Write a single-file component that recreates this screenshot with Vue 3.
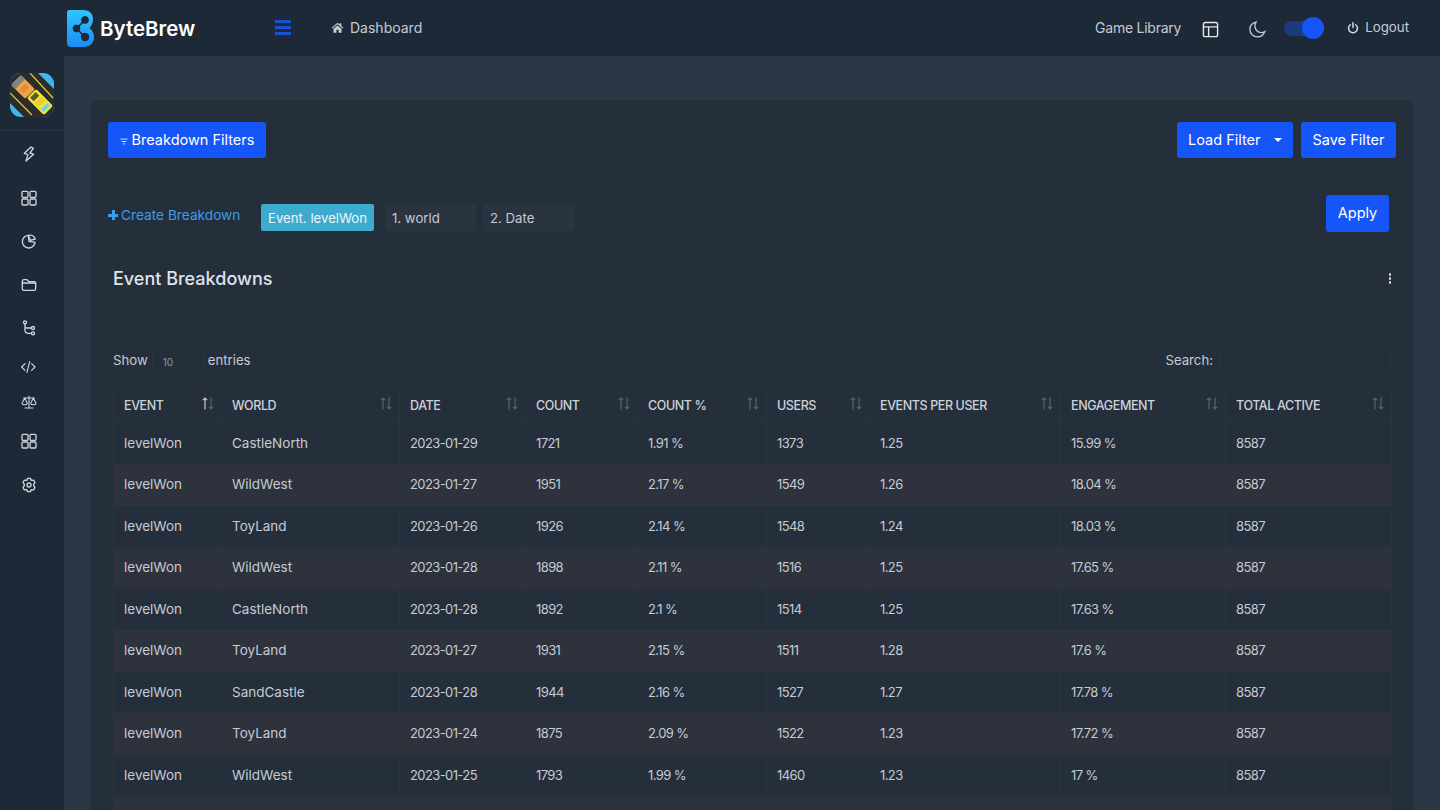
<script setup>
const navIcons = [
  { id: 'bolt', h: 44 }, { id: 'grid', h: 43.5 }, { id: 'pie', h: 43.5 }, { id: 'folder', h: 44.5 },
  { id: 'branch', h: 41.5 }, { id: 'code', h: 36 }, { id: 'scale', h: 34 }, { id: 'grid', h: 43 }, { id: 'gear', h: 46 }
]
const columns = [
  { name: 'EVENT', w: 108, active: true }, { name: 'WORLD', w: 178 }, { name: 'DATE', w: 126 },
  { name: 'COUNT', w: 112 }, { name: 'COUNT %', w: 129 }, { name: 'USERS', w: 103 },
  { name: 'EVENTS PER USER', w: 191 }, { name: 'ENGAGEMENT', w: 165 }, { name: 'TOTAL ACTIVE', w: 166 }
]
const rows = [
  ['levelWon', 'CastleNorth', '2023-01-29', '1721', '1.91 %', '1373', '1.25', '15.99 %', '8587'],
  ['levelWon', 'WildWest', '2023-01-27', '1951', '2.17 %', '1549', '1.26', '18.04 %', '8587'],
  ['levelWon', 'ToyLand', '2023-01-26', '1926', '2.14 %', '1548', '1.24', '18.03 %', '8587'],
  ['levelWon', 'WildWest', '2023-01-28', '1898', '2.11 %', '1516', '1.25', '17.65 %', '8587'],
  ['levelWon', 'CastleNorth', '2023-01-28', '1892', '2.1 %', '1514', '1.25', '17.63 %', '8587'],
  ['levelWon', 'ToyLand', '2023-01-27', '1931', '2.15 %', '1511', '1.28', '17.6 %', '8587'],
  ['levelWon', 'SandCastle', '2023-01-28', '1944', '2.16 %', '1527', '1.27', '17.78 %', '8587'],
  ['levelWon', 'ToyLand', '2023-01-24', '1875', '2.09 %', '1522', '1.23', '17.72 %', '8587'],
  ['levelWon', 'WildWest', '2023-01-25', '1793', '1.99 %', '1460', '1.23', '17 %', '8587'],
  ['', '', '', '', '', '', '', '', '']
]
</script>

<template>
  <div class="page">
    <header class="topbar">
      <div class="brand">
        <svg class="logo" viewBox="0 0 27 37">
          <defs>
            <linearGradient id="lg" x1="0" y1="0" x2="0" y2="1">
              <stop offset="0" stop-color="#2fc6ff" />
              <stop offset="1" stop-color="#1a8df6" />
            </linearGradient>
          </defs>
          <path fill="url(#lg)" d="M0 2C0 1 1 0 2 0H16C23 0 26 4 26 9C26 13 24.500 16 22.500 18C25 20 27 23 27 27C27 33 23 37 16 37H4C1.500 37 0 35.500 0 33Z" />
          <g fill="#1e2938" stroke="#1e2938">
            <circle cx="18" cy="10" r="3.400" />
            <circle cx="9.500" cy="18.500" r="3.400" />
            <circle cx="18" cy="27" r="3.800" />
            <path stroke-width="1.600" d="M18 10 9.500 18.500 18 27" fill="none" />
          </g>
        </svg>
        <span class="brand-name">ByteBrew</span>
      </div>
      <div class="burger"><i></i><i></i><i></i></div>
      <svg class="home" viewBox="0 0 24 20">
        <path fill="#c5cad3" d="M12 1 1 10.500 2.300 12 12 4 21.700 12 23 10.500 19 7V2H16V4.500ZM4.500 12.500V19.500H10V14H14V19.500H19.500V12.500L12 6.300Z" />
      </svg>
      <span class="crumb">Dashboard</span>
      <span class="spacer"></span>
      <span class="crumb library">Game Library</span>
      <svg class="layout-ico" viewBox="0 0 18 18" fill="none" stroke="#e4e7ec" stroke-width="1.500">
        <rect x="1.500" y="1.500" width="15" height="15" rx="2" />
        <path d="M1.500 6.200H16.500M7 6.200V16.500" />
      </svg>
      <svg class="moon" viewBox="0 0 18 18" fill="none" stroke="#c5cad3" stroke-width="1.400">
        <path d="M7.500 1.200C3.500 2 1 5.200 1 9C1 13.300 4.500 16.800 8.800 16.800C12.500 16.800 15.500 14.500 16.600 11.300C15.400 12 14.200 12.300 13 12.300C9.400 12.300 6.300 9.300 6.300 5.500C6.300 4 6.700 2.500 7.500 1.200Z" />
      </svg>
      <div class="switch"><span class="thumb"></span></div>
      <svg class="power" viewBox="0 0 14 14" fill="none" stroke="#d4d8df" stroke-width="1.800" stroke-linecap="round">
        <path d="M7 1V6.500M3.800 3.200A5.200 5.200 0 1 0 10.200 3.200" />
      </svg>
      <span class="crumb logout">Logout</span>
    </header>

    <div class="body">
      <aside class="sidebar">
        <div class="avatar-wrap">
          <svg class="avatar" viewBox="0 0 44 44">
            <defs>
              <clipPath id="av"><rect width="44" height="44" rx="11" /></clipPath>
            </defs>
            <g clip-path="url(#av)">
              <rect width="44" height="44" fill="#3cb8ee" />
              <path fill="#2e2c2b" d="M0 0H28L44 16V44H14L0 30Z" />
              <path stroke="#d8d434" stroke-width="1.200" fill="none" d="M20 0 43 25M0 20 22 42" />
              <g transform="rotate(-45 13 14)">
                <rect x="6" y="4" width="14" height="20" rx="2" fill="#f2a347" />
                <rect x="6" y="4" width="14" height="6" rx="1.500" fill="#7d8388" />
                <rect x="9" y="13" width="8" height="6" rx="1" fill="#dc8f38" />
              </g>
              <g transform="rotate(-45 30 29)">
                <rect x="23.500" y="17" width="13" height="24" rx="2" fill="#f4e23c" />
                <rect x="25.500" y="35" width="9" height="3.500" fill="#69d2e6" />
                <rect x="26" y="19" width="8" height="5" fill="#5b5a2c" />
                <rect x="25.500" y="26" width="9" height="6" fill="#e6cf2f" />
              </g>
            </g>
          </svg>
        </div>
        <nav class="nav">
          <div v-for="(item, i) in navIcons" :key="i" class="nav-item" :style="{ height: item.h + 'px' }">
            <svg viewBox="0 0 24 24" class="nav-ico" fill="none" stroke="#d0d5dc" stroke-width="2" stroke-linejoin="round" stroke-linecap="round">
              <template v-if="item.id === 'bolt'">
                <path d="M15 1.500 5 11 10.500 13 7.500 22.500 19 12.500 13.500 10.500 18.500 3.500Z" />
              </template>
              <template v-else-if="item.id === 'grid'">
                <rect x="1.500" y="2" width="9" height="9" rx="1.500" />
                <rect x="13.500" y="2" width="9" height="9" rx="1.500" />
                <rect x="1.500" y="13.500" width="9" height="9" rx="1.500" />
                <rect x="13.500" y="13.500" width="9" height="9" rx="1.500" />
              </template>
              <template v-else-if="item.id === 'pie'">
                <path d="M11 3.500A9.500 9.500 0 1 0 21 14L12 12.500Z" />
                <path d="M11 3.500C16 2 20 5 21.500 9L14 11Z" />
              </template>
              <template v-else-if="item.id === 'folder'">
                <path d="M2 6.500C2 5 3 4 4.500 4H9L11.500 7H19.500C21 7 22 8 22 9.500V17.500C22 19 21 20 19.500 20H4.500C3 20 2 19 2 17.500Z" />
                <path d="M2 9H22" />
              </template>
              <template v-else-if="item.id === 'branch'">
                <circle cx="6" cy="3.500" r="2.300" />
                <circle cx="18" cy="12" r="2.300" />
                <circle cx="18" cy="20" r="2.300" />
                <path d="M6 6V15C6 18 8 20 11 20H15.500M6 10C6 11.500 7.500 12 9 12H15.500" />
              </template>
              <template v-else-if="item.id === 'code'">
                <path d="M7 7 2 12 7 17M17 7 22 12 17 17M14 4 10 20" stroke-width="1.700" transform="translate(-1 0)" />
              </template>
              <template v-else-if="item.id === 'scale'">
                <path d="M12 3V21M6 21H18M4 6H20M12 4.500 12 6" stroke-width="1.600" />
                <path d="M5.500 6 1.500 14C2 17 9 17 9.500 14ZM18.500 6 14.500 14C15 17 22 17 22.500 14Z" stroke-width="1.600" />
              </template>
              <template v-else>
                <path d="M10 2H14L15.500 5 19 4.800 21 8.200 19 11V13L21 15.800 19 19.200 15.500 19 14 22H10L8.500 19 5 19.200 3 15.800 5 13V11L3 8.200 5 4.800 8.500 5Z" />
                <circle cx="12" cy="12" r="3" />
              </template>
            </svg>
          </div>
        </nav>
      </aside>

      <main class="main">
        <section class="card">
          <div class="filter-bar">
            <button class="btn filters-btn">
              <svg class="filter-ico" viewBox="0 0 10 8" fill="none" stroke="#fff" stroke-width="1">
                <path d="M0.500 1H9.500M2 4H8M3.500 7H6.500" />
              </svg>
              Breakdown Filters
            </button>
            <div class="filter-actions">
              <button class="btn load-btn">Load Filter<span class="caret"></span></button>
              <button class="btn save-btn">Save Filter</button>
            </div>
          </div>

          <div class="breakdown-row">
            <a class="create"><span class="plus"></span>Create Breakdown</a>
            <span class="tag tag-event">Event. levelWon</span>
            <span class="tag tag-world">1. world</span>
            <span class="tag tag-date">2. Date</span>
            <span class="spacer"></span>
            <button class="btn apply-btn">Apply</button>
          </div>

          <div class="title-row">
            <h2>Event Breakdowns</h2>
            <div class="kebab"><i></i><i></i><i></i></div>
          </div>

          <div class="table-area">
            <div class="controls">
              <div class="control-group">
                <span>Show</span>
                <span class="select">10</span>
                <span>entries</span>
              </div>
              <div class="control-group search">
                <span>Search:</span>
                <span class="search-box"></span>
              </div>
            </div>
            <table>
              <colgroup>
                <col v-for="c in columns" :key="c.name" :style="{ width: c.w + 'px' }" />
              </colgroup>
              <thead>
                <tr>
                  <th v-for="c in columns" :key="c.name">
                    <div class="th-inner">
                      <span>{{ c.name }}</span>
                      <svg class="sort" viewBox="0 0 12 13" fill="none" stroke-width="1.200">
                        <path :stroke="c.active ? '#c9ced6' : '#59626f'" d="M3 12.500V1M0.800 3.200 3 1 5.200 3.200" />
                        <path stroke="#59626f" d="M9 0.500V12M6.800 9.800 9 12 11.200 9.800" />
                      </svg>
                    </div>
                  </th>
                </tr>
              </thead>
              <tbody>
                <tr v-for="(r, i) in rows" :key="i">
                  <td v-for="(v, j) in r" :key="j" :class="{ num: j > 1 }">{{ v }}</td>
                </tr>
              </tbody>
            </table>
          </div>
        </section>
      </main>
    </div>
  </div>
</template>

<style scoped>
.page {
  width: 1440px;
  height: 810px;
  overflow: hidden;
  display: flex;
  flex-direction: column;
  background: #2b3544;
  font-family: Inter, "Liberation Sans", sans-serif;
  font-size: 14px;
  color: #c5cad3;
}
.topbar {
  height: 56px;
  flex: none;
  box-sizing: border-box;
  display: flex;
  align-items: center;
  background: #1e2938;
  padding: 0 31px 0 67px;
}
.brand {
  display: flex;
  align-items: center;
  width: 208px;
}
.logo {
  width: 27px;
  height: 37px;
}
.brand-name {
  margin-left: 6px;
  font-size: 20.500px;
  font-weight: 600;
  color: #fff;
}
.burger {
  width: 16px;
  display: flex;
  flex-direction: column;
  gap: 3px;
  margin-bottom: 1px;
}
.burger i {
  height: 3px;
  background: #1a50d8;
}
.home {
  width: 13px;
  height: 11px;
  margin-left: 40px;
  margin-bottom: 1px;
}
.crumb {
  color: #c5cad3;
  font-size: 14px;
  margin-left: 6px;
  margin-bottom: 2px;
}
.spacer {
  flex: 1;
}
.library {
  margin-left: 0;
  letter-spacing: -0.25px;
  margin-bottom: 1px;
}
.logout {
  font-size: 13.300px;
  margin-left: 6px;
}
.layout-ico {
  width: 17px;
  height: 17px;
  margin-left: 21px;
  margin-top: 2px;
}
.moon {
  width: 17px;
  height: 17px;
  margin-left: 30px;
  margin-top: 2px;
}
.switch {
  width: 40px;
  height: 15px;
  margin-left: 18px;
  border-radius: 8px;
  background: #1b3a80;
  position: relative;
}
.thumb {
  position: absolute;
  right: 0;
  top: -3.500px;
  width: 22px;
  height: 22px;
  border-radius: 50%;
  background: #1655f7;
}
.power {
  width: 12px;
  height: 12px;
  margin-left: 23px;
  margin-bottom: 1px;
}
.body {
  flex: 1;
  display: flex;
  min-height: 0;
}
.sidebar {
  width: 64px;
  flex: none;
  background: #1e2938;
}
.avatar-wrap {
  height: 75px;
  box-sizing: border-box;
  padding: 17px 0 0 10px;
  border-bottom: 1px solid #2a3543;
}
.avatar {
  width: 44px;
  height: 44px;
  display: block;
}
.nav {
  padding-top: 1px;
}
.nav-item {
  display: flex;
  align-items: center;
  justify-content: center;
  padding-right: 6px;
}
.nav-ico {
  width: 16px;
  height: 16px;
}
.main {
  flex: 1;
  padding: 44px 27px 0;
  min-width: 0;
}
.card {
  background: #252f3c;
  border-radius: 8px 8px 0 0;
}
.btn {
  border: 0;
  border-radius: 3px;
  background: #1655f7;
  color: #fff;
  font: inherit;
  font-size: 14.500px;
  font-weight: 400;
  height: 36px;
  display: inline-flex;
  align-items: center;
  justify-content: center;
  padding: 0 0 2px;
  box-sizing: border-box;
}
.filter-bar {
  height: 80px;
  box-sizing: border-box;
  padding: 1px 17px 0;
  display: flex;
  align-items: center;
  justify-content: space-between;
  border-bottom: 1px solid #2a3441;
}
.filters-btn {
  width: 158px;
}
.filter-ico {
  width: 8px;
  height: 7px;
  margin-right: 4px;
  margin-top: 4px;
}
.filter-actions {
  display: flex;
  gap: 8px;
}
.load-btn {
  width: 116px;
  justify-content: flex-start;
  padding-left: 11px;
}
.caret {
  margin-left: 14px;
  margin-top: 2px;
  border: 4px solid transparent;
  border-top-color: #fff;
  border-bottom: 0;
}
.save-btn {
  width: 95px;
}
.breakdown-row {
  height: 72px;
  box-sizing: border-box;
  padding: 15px 24px 0 17px;
  display: flex;
  align-items: flex-start;
}
.create {
  color: #3b9cea;
  font-size: 13.700px;
  width: 153px;
  margin-top: 12px;
  display: flex;
  align-items: center;
}
.plus {
  width: 10px;
  height: 10px;
  margin-right: 3px;
  background:
    linear-gradient(#3b9cea, #3b9cea) center / 100% 3px no-repeat,
    linear-gradient(#3b9cea, #3b9cea) center / 3px 100% no-repeat;
}
.tag {
  height: 27px;
  margin-top: 9px;
  box-sizing: border-box;
  padding-left: 7px;
  display: flex;
  align-items: center;
  border-radius: 2px;
  font-size: 13.200px;
  background: #2a3340;
}
.tag-event {
  width: 113px;
  background: #3dabcd;
  color: #eef6fa;
}
.tag-world {
  width: 91px;
  margin-left: 11px;
}
.tag-date {
  width: 92px;
  margin-left: 7px;
}
.apply-btn {
  width: 63px;
  height: 37px;
}
.title-row {
  height: 73px;
  box-sizing: border-box;
  padding: 15px 22px 0 22px;
  display: flex;
  align-items: flex-start;
  justify-content: space-between;
  border-bottom: 1px solid #2a3441;
}
h2 {
  margin: 0;
  font-size: 18px;
  line-height: 24px;
  font-weight: 500;
  color: #dfe3ea;
}
.kebab {
  display: flex;
  flex-direction: column;
  gap: 1.500px;
  margin-top: 6px;
}
.kebab i {
  width: 2.500px;
  height: 2.500px;
  border-radius: 50%;
  background: #d0d5dc;
}
.table-area {
  padding: 22px 22px 0;
}
.controls {
  height: 28px;
  display: flex;
  justify-content: space-between;
  margin-bottom: 13px;
}
.control-group {
  display: flex;
  align-items: center;
  color: #c5cad3;
  font-size: 13.200px;
}
.control-group > span:not(.select):not(.search-box) {
  margin-bottom: 2px;
}
.select {
  width: 52px;
  height: 28px;
  margin: 0 4px;
  box-sizing: border-box;
  padding: 2px 0 0 10px;
  display: flex;
  align-items: center;
  font-size: 10px;
  color: #8f97a3;
  border: 1px solid #2a3441;
  border-radius: 4px;
}
.search span:first-child {
  margin-right: 7px;
}
.search-box {
  width: 171px;
  height: 28px;
  box-sizing: border-box;
  border: 1px solid #2a3441;
  border-radius: 4px;
}
table {
  width: 1278px;
  table-layout: fixed;
  border-collapse: collapse;
  font-size: 13.500px;
}
th {
  height: 33px;
  padding: 0 6px 0 10px;
  text-align: left;
  font-weight: 500;
  font-size: 12.500px;
  letter-spacing: -0.4px;
  color: #cdd2da;
  border: 1px solid #2a3441;
}
.th-inner {
  display: flex;
  justify-content: space-between;
  align-items: flex-start;
}
.sort {
  width: 12px;
  height: 13px;
  margin: -1px 1px 0 0;
  flex: none;
}
td {
  height: 41.500px;
  box-sizing: border-box;
  padding: 0 10px 1px;
  border-left: 1px solid #2a3441;
  border-right: 1px solid #2a3441;
  color: #c5cad3;
}
td.num {
  font-size: 13px;
  letter-spacing: -0.6px;
}
tbody tr:nth-child(even) td {
  background: #2d323d;
}
</style>
